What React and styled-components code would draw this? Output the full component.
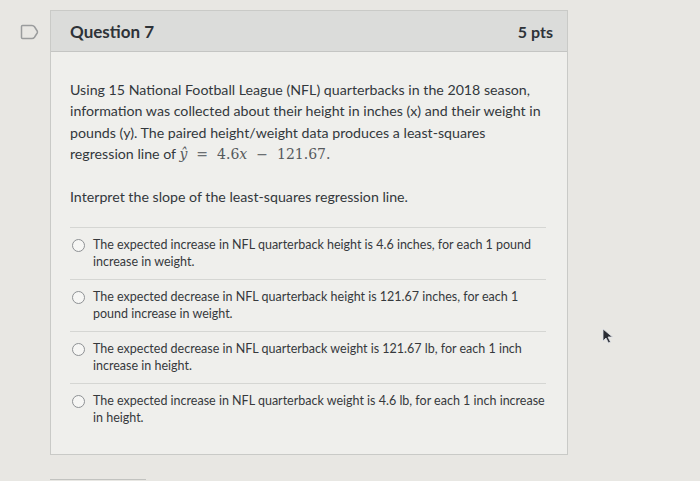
import React from 'react'
import styled, { createGlobalStyle } from 'styled-components'

const Global = createGlobalStyle`
  html, body {
    margin: 0;
    padding: 0;
    background: #e8e7e3;
    font-family: Lato, "Open Sans", sans-serif;
    color: #353a3d;
  }
`

const options = [
  'The expected increase in NFL quarterback height is 4.6 inches, for each 1 pound increase in weight.',
  'The expected decrease in NFL quarterback height is 121.67 inches, for each 1 pound increase in weight.',
  'The expected decrease in NFL quarterback weight is 121.67 lb, for each 1 inch increase in height.',
  'The expected increase in NFL quarterback weight is 4.6 lb, for each 1 inch increase in height.',
]

const Flag = () => (
  <FlagBox>
    <svg width="19" height="16" viewBox="0 0 19 16">
      <path d="M1.5 2.5 Q1.5 1.5 2.5 1.5 L12 1.5 Q13.5 1.5 14.5 2.8 L17.2 7 Q17.8 8 17.2 9 L14.5 13.2 Q13.5 14.5 12 14.5 L2.5 14.5 Q1.5 14.5 1.5 13.5 Z"
        fill="none" stroke="#9a9c9d" strokeWidth="1.5" />
    </svg>
  </FlagBox>
)

const Cursor = () => (
  <CursorBox>
    <svg width="12" height="16" viewBox="0 0 12 16">
      <path d="M1 1 L1 13 L4 10 L6.5 15 L8.5 14 L6 9 L10.5 9 Z" fill="#2a2d33" stroke="#dfe3ea" strokeWidth="0.8" />
    </svg>
  </CursorBox>
)

export default function App() {
  return (
    <Page>
      <Global />
      <Flag />
      <Column>
        <Card>
          <Header>
            <Title>Question 7</Title>
            <Points>5 pts</Points>
          </Header>
          <Body>
            <Para>
              Using 15 National Football League (NFL) quarterbacks in the 2018 season,
              information was collected about their height in inches (x) and their weight in
              pounds (y). The paired height/weight data produces a least-squares
              regression line of{' '}
              <Math>
                <Var>ŷ</Var>
                <Op>=</Op>
                4.6<Var>x</Var>
                <Op>−</Op>
                121.67.
              </Math>
            </Para>
            <Para $last>Interpret the slope of the least-squares regression line.</Para>
            <Options>
              {options.map((o) => (
                <Option key={o}>
                  <Radio />
                  <OptionText>{o}</OptionText>
                </Option>
              ))}
            </Options>
          </Body>
        </Card>
        <NextCard />
      </Column>
      <Cursor />
    </Page>
  )
}

const Page = styled.div`
  position: relative;
  display: flex;
  align-items: flex-start;
  width: 700px;
  height: 481px;
  overflow: hidden;
  padding-top: 10px;
  box-sizing: border-box;
`

const FlagBox = styled.div`
  width: 50px;
  display: flex;
  justify-content: center;
  padding-top: 14px;
  padding-left: 8px;
  box-sizing: border-box;
`

const Column = styled.div`
  display: flex;
  flex-direction: column;
  gap: 24px;
`

const Card = styled.div`
  width: 518px;
  box-sizing: border-box;
  border: 1px solid #c9cac7;
  background: #efefec;
`

const Header = styled.div`
  height: 40px;
  display: flex;
  align-items: center;
  justify-content: space-between;
  padding: 0 14px 0 19px;
  background: #dbdcda;
  border-bottom: 1px solid #c4c5c3;
`

const Title = styled.h2`
  margin: 0;
  font-size: 17px;
  font-weight: 700;
  color: #2e3338;
`

const Points = styled.span`
  font-size: 16px;
  font-weight: 700;
  color: #2e3338;
`

const Body = styled.div`
  padding: 27px 19px 19px 19px;
`

const Para = styled.p`
  margin: 0 0 ${(p) => (p.$last ? '20px' : '21px')};
  font-size: 14.2px;
  line-height: 21.3px;
  color: #33383c;
`

const Math = styled.span`
  font-family: "DejaVu Serif", "Liberation Serif", serif;
  font-size: 14px;
  color: #55595c;
`

const Var = styled.span`
  font-style: italic;
`

const Op = styled.span`
  margin: 0 9px;
  color: #6a6e71;
`

const Options = styled.div`
  margin-right: 2px;
  border-top: 1px solid #d5d6d3;
`

const Option = styled.div`
  display: flex;
  align-items: flex-start;
  gap: 8px;
  padding: 8px 0 9px 2px;
  border-bottom: 1px solid #d5d6d3;
  &:last-child {
    border-bottom: none;
  }
`

const Radio = styled.span`
  flex: none;
  width: 11px;
  height: 11px;
  margin-top: 3px;
  border-radius: 50%;
  border: 1px solid #8e9194;
  background: #f6f6f4;
`

const OptionText = styled.span`
  font-size: 12.5px;
  line-height: 17px;
  color: #36393c;
`

const NextCard = styled.div`
  width: 96px;
  height: 10px;
  border-top: 1px solid #c2c3c0;
`

const CursorBox = styled.div`
  position: absolute;
  left: 602px;
  top: 328px;
`
